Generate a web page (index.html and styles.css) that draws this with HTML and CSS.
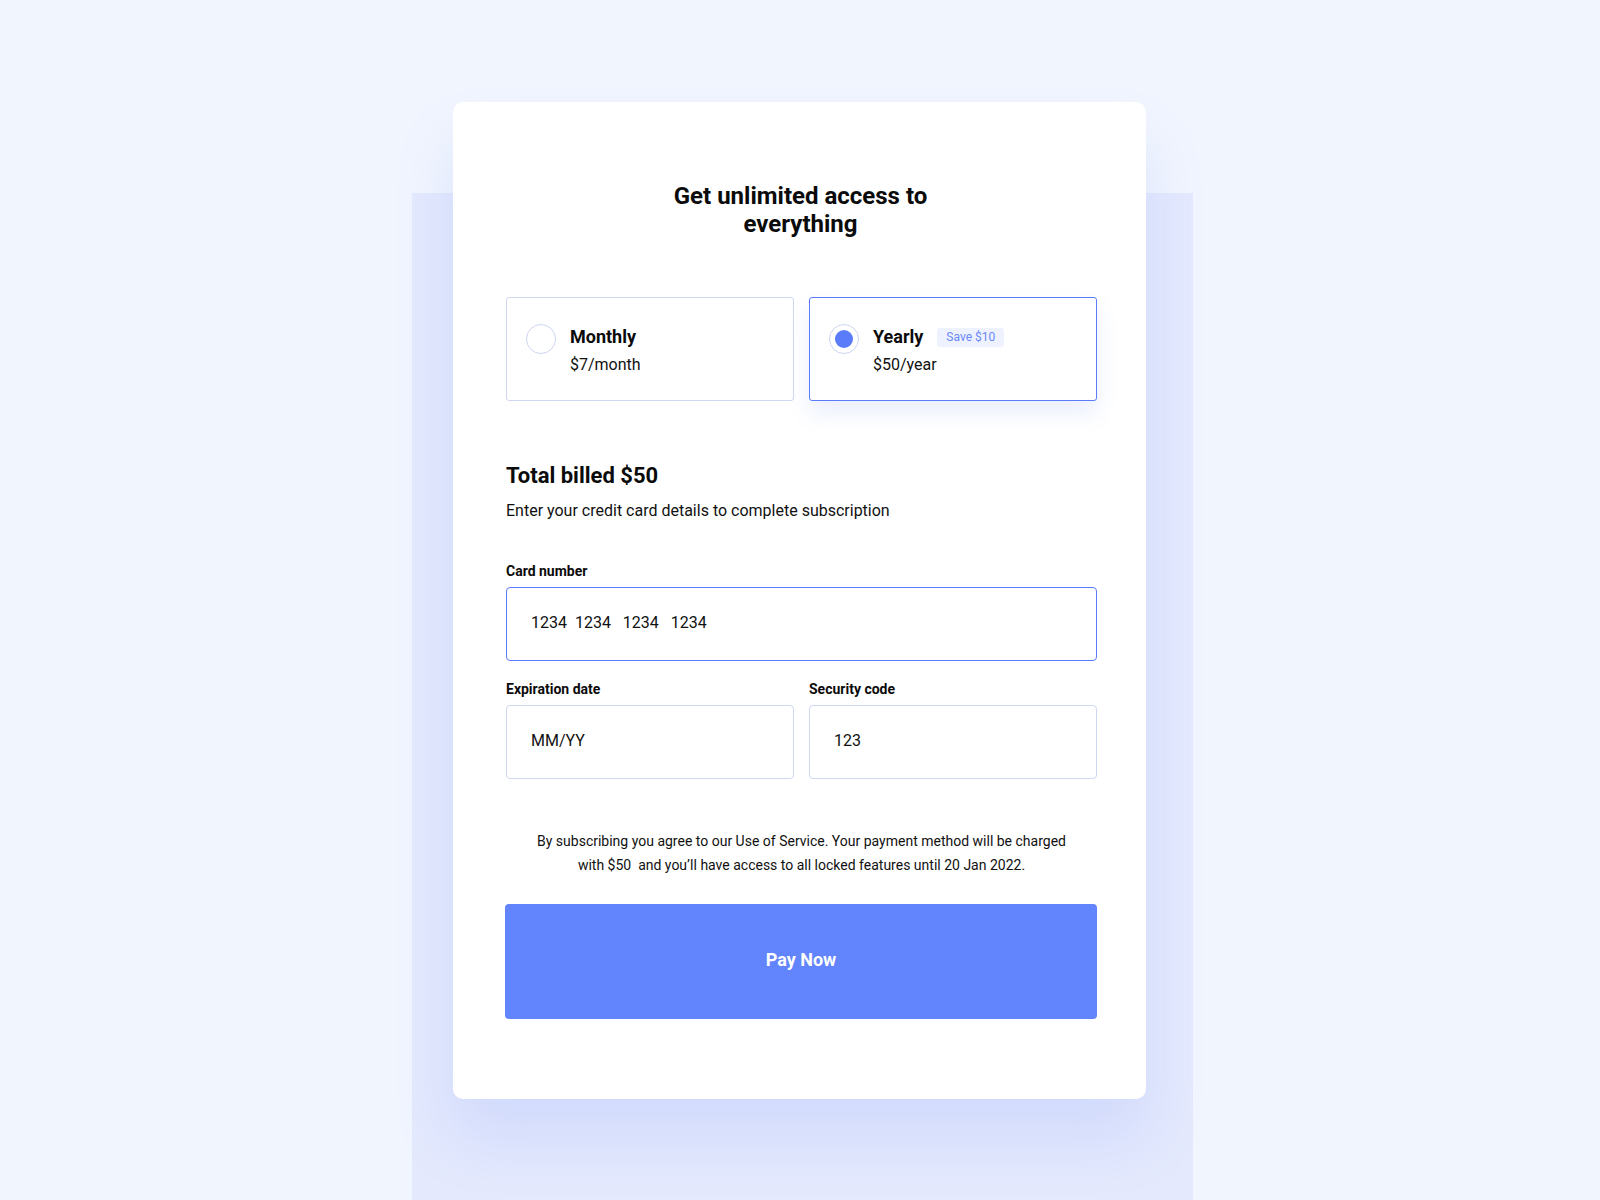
FILE: index.html
```html
<!DOCTYPE html>
<html lang="en">
<head>
<meta charset="utf-8">
<title>Subscribe</title>
<link rel="stylesheet" href="styles.css">
</head>
<body>
<main class="page">
  <section class="card">
    <h1 class="title">Get unlimited access to everything</h1>

    <div class="plans">
      <label class="plan">
        <span class="radio"></span>
        <span class="plan-text">
          <span class="plan-name">Monthly</span>
          <span class="plan-price">$7/month</span>
        </span>
      </label>
      <label class="plan plan-active">
        <span class="radio radio-on"><span class="dot"></span></span>
        <span class="plan-text">
          <span class="plan-name">Yearly <span class="badge">Save $10</span></span>
          <span class="plan-price">$50/year</span>
        </span>
      </label>
    </div>

    <h2 class="total">Total billed $50</h2>
    <p class="subtitle">Enter your credit card details to complete subscription</p>

    <div class="field">
      <div class="label">Card number</div>
      <div class="input input-focus">1234  1234   1234   1234</div>
    </div>

    <div class="row">
      <div class="field">
        <div class="label">Expiration date</div>
        <div class="input">MM/YY</div>
      </div>
      <div class="field">
        <div class="label">Security code</div>
        <div class="input">123</div>
      </div>
    </div>

    <p class="terms">By subscribing you agree to our Use of Service. Your payment method will be charged<br>with $50&nbsp; and you’ll have access to all locked features until 20 Jan 2022.</p>

    <button class="pay">Pay Now</button>
  </section>
</main>
</body>
</html>
```

FILE: styles.css
```css
* { box-sizing: border-box; }

html, body {
  margin: 0;
  padding: 0;
}

body {
  font-family: Roboto, "Liberation Sans", Arial, sans-serif;
  color: #111;
  min-height: 1200px;
  background:
    linear-gradient(#e4e9fd, #e4e9fd) 412px 193px / 781px 1100px no-repeat,
    #f1f5fe;
}

.page {
  display: flex;
  justify-content: center;
  padding: 102px 1px 0 0;
}

.card {
  width: 693px;
  background: #fff;
  border-radius: 10px;
  padding: 80px 49px 80px 53px;
  box-shadow: 0 40px 60px rgba(110, 140, 250, 0.16);
}

.title {
  margin: 0 auto;
  max-width: 284px;
  padding-left: 1px;
  padding-right: 3px;
  text-align: center;
  font-size: 24px;
  line-height: 28px;
  font-weight: 700;
  color: #0b0b0b;
}

.plans {
  display: grid;
  grid-template-columns: 288px 288px;
  gap: 15px;
  margin-top: 59px;
}

.plan {
  display: flex;
  align-items: flex-start;
  gap: 14px;
  height: 104px;
  padding: 26px 20px 0 19px;
  border: 1px solid #cfd7f2;
  border-radius: 3px;
  background: #fff;
}

.plan-active {
  border-color: #5b7cfa;
  box-shadow: 0 12px 22px rgba(91, 124, 250, 0.12);
}

.radio {
  flex: none;
  width: 30px;
  height: 30px;
  border: 1px solid #cdd5f3;
  border-radius: 50%;
  display: flex;
  align-items: center;
  justify-content: center;
}

.dot {
  width: 18px;
  height: 18px;
  border-radius: 50%;
  background: #5b7cfa;
}

.plan-text {
  display: flex;
  flex-direction: column;
}

.plan-name {
  display: flex;
  align-items: center;
  gap: 14px;
  font-size: 18px;
  line-height: 26px;
  font-weight: 700;
  color: #0b0b0b;
}

.badge {
  display: inline-block;
  height: 19px;
  padding: 0 9px;
  border-radius: 3px;
  background: #eef2fe;
  color: #6a88f8;
  font-size: 12px;
  line-height: 19px;
  font-weight: 400;
}

.plan-price {
  margin-top: 3px;
  font-size: 16px;
  line-height: 24px;
  color: #111;
}

.total {
  margin: 61px 0 0;
  font-size: 22px;
  line-height: 28px;
  font-weight: 700;
  color: #0b0b0b;
}

.subtitle {
  margin: 9px 0 0;
  font-size: 16px;
  line-height: 24px;
  color: #111;
}

.field {
  display: flex;
  flex-direction: column;
  gap: 6px;
  margin-top: 38px;
}

.row {
  display: grid;
  grid-template-columns: 288px 288px;
  gap: 15px;
}

.row .field {
  margin-top: 18px;
}

.label {
  font-size: 14px;
  line-height: 20px;
  font-weight: 700;
  color: #0b0b0b;
}

.input {
  height: 74px;
  padding: 0 24px 3px;
  display: flex;
  align-items: center;
  border: 1px solid #cfd7f2;
  border-radius: 4px;
  font-size: 16px;
  color: #111;
  white-space: pre;
}

.input-focus {
  border-color: #5b7cfa;
}

.terms {
  margin: 51px 0 0;
  text-align: center;
  font-size: 14px;
  line-height: 23.5px;
  color: #111;
}

.pay {
  display: block;
  width: 592px;
  height: 115px;
  margin: 27px 0 0 -1px;
  padding: 0 0 4px;
  border: none;
  border-radius: 4px;
  background: #6284fc;
  color: #fff;
  font-family: inherit;
  font-size: 18px;
  font-weight: 700;
  cursor: pointer;
}
```
